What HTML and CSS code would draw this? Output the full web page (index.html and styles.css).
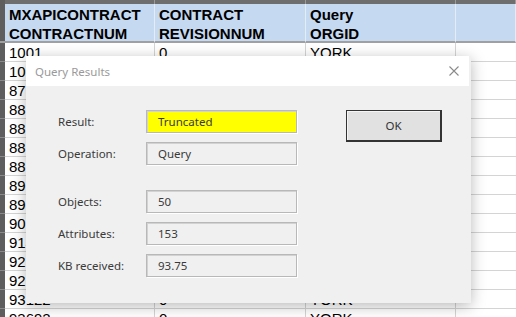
FILE: index.html
```html
<!DOCTYPE html>
<html>
<head>
<meta charset="utf-8">
<link rel="stylesheet" href="styles.css">
</head>
<body>
<div class="sheet">
  <div class="row top"><div class="rh"></div><div class="c"></div><div class="c"></div><div class="c"></div><div class="c last"></div></div>
  <div class="row head">
    <div class="rh"></div>
    <div class="c"><span>MXAPICONTRACT</span><span>CONTRACTNUM</span></div>
    <div class="c"><span>CONTRACT</span><span>REVISIONNUM</span></div>
    <div class="c"><span>Query</span><span>ORGID</span></div>
    <div class="c last"></div>
  </div>
  <div class="row"><div class="rh"></div><div class="c">1001</div><div class="c">0</div><div class="c">YORK</div><div class="c last"></div></div>
  <div class="row"><div class="rh"></div><div class="c">1002</div><div class="c">0</div><div class="c">YORK</div><div class="c last"></div></div>
  <div class="row"><div class="rh"></div><div class="c">8750</div><div class="c">0</div><div class="c">YORK</div><div class="c last"></div></div>
  <div class="row"><div class="rh"></div><div class="c">8831</div><div class="c">0</div><div class="c">YORK</div><div class="c last"></div></div>
  <div class="row"><div class="rh"></div><div class="c">8832</div><div class="c">0</div><div class="c">YORK</div><div class="c last"></div></div>
  <div class="row"><div class="rh"></div><div class="c">8833</div><div class="c">0</div><div class="c">YORK</div><div class="c last"></div></div>
  <div class="row"><div class="rh"></div><div class="c">8834</div><div class="c">0</div><div class="c">YORK</div><div class="c last"></div></div>
  <div class="row"><div class="rh"></div><div class="c">8950</div><div class="c">0</div><div class="c">YORK</div><div class="c last"></div></div>
  <div class="row"><div class="rh"></div><div class="c">8980</div><div class="c">0</div><div class="c">YORK</div><div class="c last"></div></div>
  <div class="row"><div class="rh"></div><div class="c">9050</div><div class="c">0</div><div class="c">YORK</div><div class="c last"></div></div>
  <div class="row"><div class="rh"></div><div class="c">9140</div><div class="c">0</div><div class="c">YORK</div><div class="c last"></div></div>
  <div class="row"><div class="rh"></div><div class="c">9230</div><div class="c">0</div><div class="c">YORK</div><div class="c last"></div></div>
  <div class="row"><div class="rh"></div><div class="c">9260</div><div class="c">0</div><div class="c">YORK</div><div class="c last"></div></div>
  <div class="row"><div class="rh"></div><div class="c">93122</div><div class="c">0</div><div class="c">YORK</div><div class="c last"></div></div>
  <div class="row"><div class="rh"></div><div class="c">93692</div><div class="c">0</div><div class="c">YORK</div><div class="c last"></div></div>
</div>

<div class="dialog">
  <div class="titlebar">
    <span class="title">Query Results</span>
    <svg class="close" width="10" height="10" viewBox="0 0 10 10"><path d="M0.5 0.5 L9.5 9.5 M9.5 0.5 L0.5 9.5" stroke="#8a8a8a" stroke-width="1.1" fill="none"/></svg>
  </div>
  <div class="body">
    <div class="fields">
      <div class="frow"><span class="label">Result:</span><div class="field yellow">Truncated</div></div>
      <div class="frow"><span class="label">Operation:</span><div class="field">Query</div></div>
      <div class="frow spaced"><span class="label">Objects:</span><div class="field">50</div></div>
      <div class="frow"><span class="label">Attributes:</span><div class="field">153</div></div>
      <div class="frow"><span class="label">KB received:</span><div class="field">93.75</div></div>
    </div>
    <div class="okbtn">OK</div>
  </div>
</div>
</body>
</html>
```

FILE: styles.css
```css
html, body {
  margin: 0;
  padding: 0;
}
body {
  width: 516px;
  height: 317px;
  overflow: hidden;
  background: #ffffff;
  position: relative;
  font-family: "Liberation Sans Narrow", "Liberation Sans", sans-serif;
}
.sheet {
  display: flex;
  flex-direction: column;
}
.row {
  display: grid;
  grid-template-columns: 5px 150px 151px 150px 1fr;
  height: 19px;
  box-sizing: border-box;
  font-size: 15px;
  color: #000;
}
.row .c {
  border-right: 1px solid #d4d4d4;
  border-bottom: 1px solid #d4d4d4;
  padding-left: 4px;
  line-height: 19px;
  white-space: nowrap;
  overflow: hidden;
}
.row .c.last {
  border-right: none;
}
.row .rh {
  background: #5e5e5e;
  border-bottom: 1px solid #8a8a8a;
}
.row.top {
  height: 4px;
}
.row.top .c {
  background: #6e6e6e;
  border-right: 1px solid #9a9a9a;
  border-bottom: none;
}
.row.top .rh {
  background: #5e5e5e;
  border-bottom: none;
}
.row.head {
  height: 39px;
}
.row.head .c {
  background: #c5d9f1;
  font-weight: bold;
  border-bottom: 2px solid #a0a0a0;
  border-right: 1px solid #e4ecf6;
  display: flex;
  flex-direction: column;
  line-height: 19px;
  padding-top: 1px;
}
.row.head .rh {
  border-bottom: 2px solid #a0a0a0;
}

.dialog {
  position: absolute;
  left: 26px;
  top: 56px;
  width: 445px;
  height: 247px;
  background: #f0f0f0;
  box-shadow: 0 3px 14px rgba(0, 0, 0, 0.28);
  display: flex;
  flex-direction: column;
  font-family: "Noto Sans", "Open Sans", sans-serif;
  font-size: 11.5px;
  color: #3a3a3a;
}
.titlebar {
  height: 30px;
  background: #ffffff;
  margin-right: 2px;
  display: flex;
  align-items: center;
  padding-left: 9px;
  padding-right: 10px;
}
.title {
  flex: 1;
  color: #9a9a9a;
}
.close {
  display: block;
}
.body {
  display: flex;
  padding: 24px 0 0 32px;
}
.fields {
  display: flex;
  flex-direction: column;
  gap: 9px;
}
.frow {
  display: flex;
  align-items: center;
  height: 23px;
}
.frow.spaced {
  margin-top: 16px;
}
.label {
  width: 88px;
}
.field {
  width: 151px;
  height: 23px;
  box-sizing: border-box;
  border: 1px solid #b8b8b8;
  box-shadow: inset 1px 1px 0 #d2d2d2, 1px 1px 0 #ffffff;
  padding-left: 11px;
  line-height: 21px;
  background: #f0f0f0;
}
.field.yellow {
  background: #ffff00;
}
.okbtn {
  margin-left: 49px;
  width: 96px;
  height: 32px;
  box-sizing: border-box;
  border: 1px solid #333333;
  border-right-width: 2px;
  border-bottom-width: 2px;
  background: #e1e1e1;
  box-shadow: inset 1px 1px 0 #f5f5f5;
  display: flex;
  align-items: center;
  justify-content: center;
  color: #333;
}
```
